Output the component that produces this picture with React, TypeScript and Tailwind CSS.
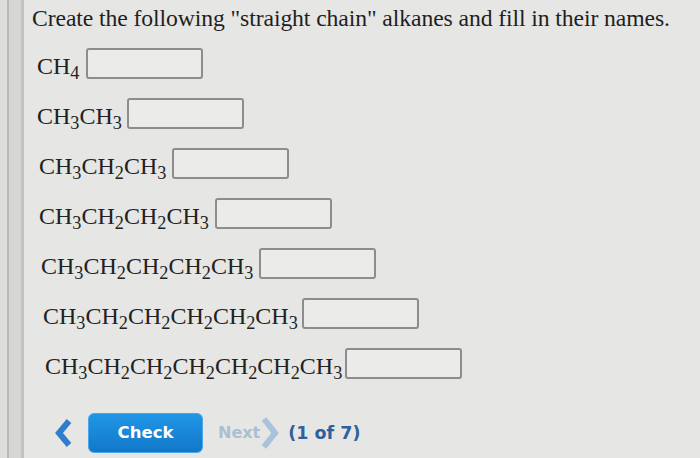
import React from "react";

const rows: { n: number; pl: number; gap: string }[] = [
  { n: 1, pl: 42, gap: "ml-[7px]" },
  { n: 2, pl: 42, gap: "ml-[5px]" },
  { n: 3, pl: 44, gap: "ml-[6px]" },
  { n: 4, pl: 44, gap: "ml-[6px]" },
  { n: 5, pl: 46, gap: "ml-[6px]" },
  { n: 6, pl: 48, gap: "ml-[4px]" },
  { n: 7, pl: 50, gap: "ml-[3px]" },
];

function Group({ h, sub }: { h: string; sub: string }) {
  return (
    <span>
      {h}
      <span className="relative top-[0.28em] text-[0.76em]">{sub}</span>
    </span>
  );
}

function Formula({ n }: { n: number }) {
  if (n === 1) return <Group h="CH" sub="4" />;
  const parts: React.ReactNode[] = [];
  parts.push(<Group key="a" h="CH" sub="3" />);
  for (let i = 0; i < n - 2; i++) parts.push(<Group key={"m" + i} h="CH" sub="2" />);
  parts.push(<Group key="z" h="CH" sub="3" />);
  return <>{parts}</>;
}

export default function App() {
  return (
    <div
      className="flex w-[700px] h-[458px] overflow-hidden bg-[#d9d9d7]"
      style={{ fontFamily: '"Liberation Serif", "Times New Roman", serif' }}
    >
      <div className="w-[9px] bg-[#dedddb] border-r-2 border-[#b9b9b7]" />
      <div className="w-[15px] bg-[#d6d6d4] border-r-[3px] border-[#c2c2c0]" />
      <div className="flex-1 bg-[#e6e6e4] flex flex-col text-[#1f1f1f]">
        <div className="pl-[8px] pt-[5px] text-[23.7px] leading-[26px] tracking-[-0.1px] whitespace-nowrap">
          Create the following "straight chain" alkanes and fill in their names.
        </div>
        <div className="flex flex-col mt-[17px] gap-[19px]">
          {rows.map((r) => (
            <div key={r.n} className="flex items-end h-[31px]" style={{ paddingLeft: r.pl - 29 }}>
              <span className="text-[24px] leading-[24px] whitespace-nowrap mb-[-1px] text-[#222]">
                <Formula n={r.n} />
              </span>
              <div className={r.gap + " w-[117px] h-[31px] border-2 border-[#8d8d8b] rounded-[3px] bg-[#ebebe9]"} />
            </div>
          ))}
        </div>
        <div
          className="flex items-center mt-[34px] pl-[29px]"
          style={{ fontFamily: '"DejaVu Sans", Verdana, sans-serif' }}
        >
          <svg width="20" height="30" viewBox="0 0 20 30" className="mr-[15px]">
            <path d="M16 3 L6 15 L16 27" fill="none" stroke="#2f7dcc" strokeWidth="6" strokeLinejoin="miter" />
          </svg>
          <div className="w-[115px] h-[40px] rounded-[6px] bg-gradient-to-b from-[#2196e6] to-[#1278c8] border border-[#4aa6e8] flex items-center justify-center text-white font-bold text-[16.5px]">
            Check
          </div>
          <span className="ml-[15px] text-[#a9bfd4] font-bold text-[16px]">Next</span>
          <svg width="20" height="34" viewBox="0 0 20 34" className="ml-[0px]">
            <path d="M4 3 L15 17 L4 31" fill="none" stroke="#a8c3da" strokeWidth="6" strokeLinejoin="miter" />
          </svg>
          <span className="ml-[8px] text-[#2f609c] font-bold text-[17.5px]">(1 of 7)</span>
        </div>
      </div>
    </div>
  );
}
